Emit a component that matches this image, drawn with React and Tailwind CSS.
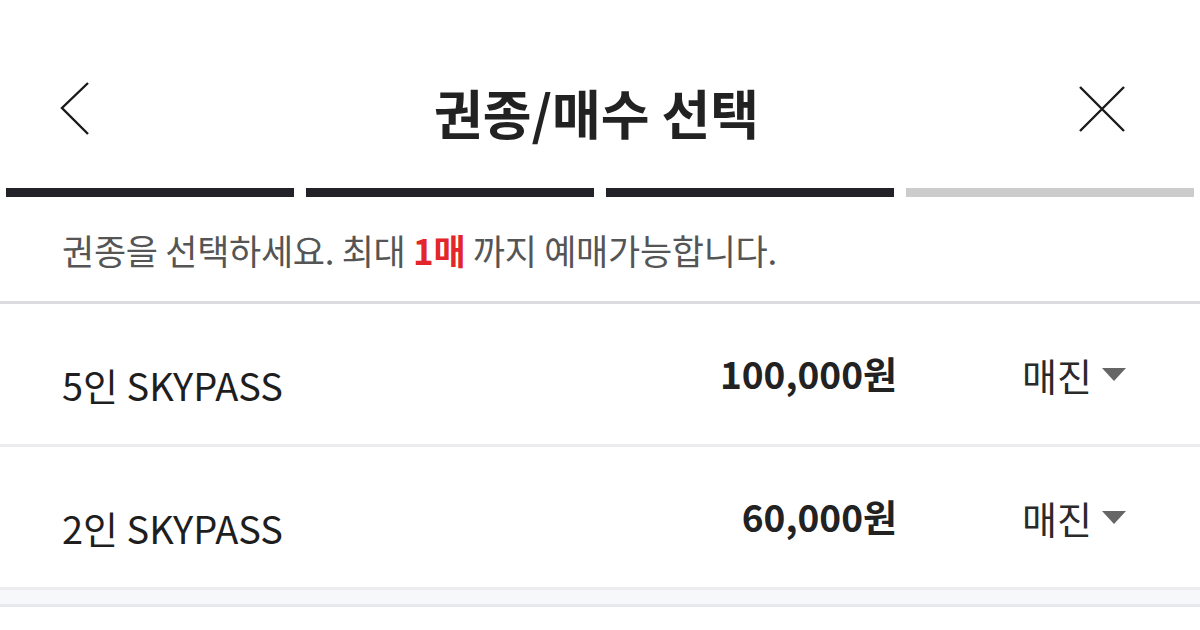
const font = { fontFamily: '"Noto Sans CJK KR", "Noto Sans", sans-serif' };

const steps = [true, true, true, false];

const tickets = [
  { name: "5인 SKYPASS", price: "100,000원", status: "매진" },
  { name: "2인 SKYPASS", price: "60,000원", status: "매진" },
];

export default function App() {
  return (
    <div className="w-[1200px] h-[630px] bg-white overflow-hidden" style={font}>
      {/* Header */}
      <header className="h-[188px] pt-[30px] pl-[60px] pr-[75px] grid grid-cols-[1fr_auto_1fr] items-center">
        <button className="w-[46px] h-[56px] flex items-center">
          <svg width="30" height="54" viewBox="0 0 30 54" fill="none">
            <path d="M28 1 L2 26 L28 52" stroke="#1a1a1a" strokeWidth="2.4" />
          </svg>
        </button>
        <h1 className="text-[53px] font-bold text-[#222] leading-none pt-[6px] ml-[8px]">
          권종/매수 선택
        </h1>
        <button className="justify-self-end w-[46px] h-[46px] flex items-center justify-end">
          <svg width="46" height="46" viewBox="0 0 46 46" fill="none">
            <path d="M1 1 L45 45 M45 1 L1 45" stroke="#1a1a1a" strokeWidth="2.4" />
          </svg>
        </button>
      </header>

      {/* Step bars */}
      <div className="flex gap-[12px] px-[6px]">
        {steps.map((done, i) => (
          <div
            key={i}
            className={`flex-1 h-[9px] ${done ? "bg-[#222228]" : "bg-[#cccccc]"}`}
          />
        ))}
      </div>

      {/* Guide */}
      <div className="h-[107px] px-[62px] flex items-center border-b-[3px] border-[#dcdcdf]">
        <p className="text-[35px] text-[#555] tracking-[-0.3px] pt-[2px]">
          권종을 선택하세요. 최대 <span className="font-bold text-[#e3262b]">1매</span> 까지 예매가능합니다.
        </p>
      </div>

      {/* Ticket rows */}
      {tickets.map((t) => (
        <div
          key={t.name}
          className="h-[143px] pl-[62px] pr-[74px] flex items-center border-b-[3px] border-[#ececee]"
        >
          <span className="flex-1 text-[38px] text-[#1e1e1e] pt-[20px]">{t.name}</span>
          <span className="text-[37px] font-bold text-[#222]">{t.price}</span>
          <div className="w-[229px] flex items-center justify-end gap-[10px]">
            <span className="text-[38px] text-[#2a2a2a]">{t.status}</span>
            <svg width="24" height="13" viewBox="0 0 24 13">
              <path d="M0 0 H24 L12 13 Z" fill="#666" />
            </svg>
          </div>
        </div>
      ))}

      {/* Bottom band */}
      <div className="h-[17px] bg-[#f7f8fa] border-b-[3px] border-[#e8e9ec]" />
    </div>
  );
}
